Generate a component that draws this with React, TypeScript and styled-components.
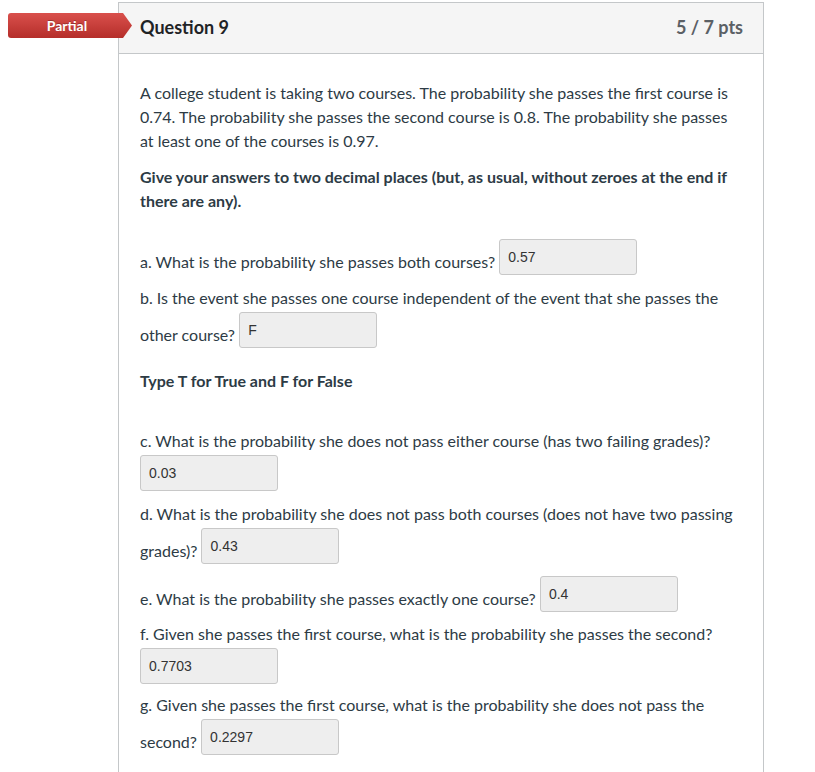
import React from 'react';
import styled, { createGlobalStyle } from 'styled-components';

const GlobalStyle = createGlobalStyle`
  html, body { margin: 0; padding: 0; background: #ffffff; }
  body {
    font-family: Lato, "Open Sans", "Liberation Sans", sans-serif;
    color: #2d3b45;
  }
`;

const Page = styled.div`
  box-sizing: border-box;
  width: 815px;
  padding: 2px 0 0 118px;
`;

const Question = styled.section`
  position: relative;
  box-sizing: border-box;
  width: 646px;
  border: 1px solid #c4c7c9;
  border-bottom: none;
`;

const Badge = styled.div`
  position: absolute;
  left: -111px;
  top: 10px;
  box-sizing: border-box;
  width: 124px;
  height: 25px;
  padding-right: 6px;
  display: flex;
  align-items: center;
  justify-content: center;
  border-radius: 3px 0 0 3px;
  background: linear-gradient(#d9504c, #b52e2a);
  clip-path: polygon(0 0, calc(100% - 9px) 0, 100% 50%, calc(100% - 9px) 100%, 0 100%);
  color: #ffffff;
  font-size: 14px;
  font-weight: 700;
  text-shadow: 0 -1px 0 rgba(0, 0, 0, 0.25);
`;

const Header = styled.header`
  display: flex;
  align-items: center;
  justify-content: space-between;
  box-sizing: border-box;
  height: 51px;
  padding: 0 20px 2px 21px;
  background: #f5f5f5;
  border-bottom: 1px solid #c4c7c9;
`;

const Title = styled.h2`
  margin: 0;
  font-size: 18px;
  font-weight: 700;
  color: #1f2326;
`;

const Points = styled.div`
  font-size: 18px;
  font-weight: 700;
  color: #5b6065;
`;

const Body = styled.div`
  padding: 27px 20px 24px 21px;
`;

const P = styled.p<{ $mt?: number; $bold?: boolean }>`
  margin: ${(p) => p.$mt ?? 0}px 0 0;
  font-size: 16px;
  line-height: 24px;
  font-weight: ${(p) => (p.$bold ? 700 : 400)};
`;

const Answer = styled.span`
  display: inline-block;
  box-sizing: border-box;
  width: 138px;
  height: 36px;
  margin-top: 2px;
  padding: 7px 8px 0;
  border: 1px solid #c8c8c8;
  border-radius: 3px;
  background: #eeeeee;
  font-family: "Liberation Sans", Arial, sans-serif;
  font-size: 14px;
  line-height: 20px;
  font-weight: 400;
  color: #333333;
  vertical-align: 5.5px;
`;

export default function App() {
  return (
    <>
      <GlobalStyle />
      <Page>
        <Question>
          <Badge>Partial</Badge>
          <Header>
            <Title>Question 9</Title>
            <Points>5 / 7 pts</Points>
          </Header>
          <Body>
            <P>
              A college student is taking two courses. The probability she passes the first course is
              0.74. The probability she passes the second course is 0.8. The probability she passes
              at least one of the courses is 0.97.
            </P>
            <P $mt={12} $bold>
              Give your answers to two decimal places (but, as usual, without zeroes at the end if
              there are any).
            </P>
            <P $mt={24}>
              a. What is the probability she passes both courses? <Answer>0.57</Answer>
            </P>
            <P $mt={11}>
              b. Is the event she passes one course independent of the event that she passes the
              other course? <Answer>F</Answer>
            </P>
            <P $mt={21} $bold>
              Type T for True and F for False
            </P>
            <P $mt={36}>
              c. What is the probability she does not pass either course (has two failing grades)?{' '}
              <Answer>0.03</Answer>
            </P>
            <P $mt={11}>
              d. What is the probability she does not pass both courses (does not have two passing
              grades)? <Answer>0.43</Answer>
            </P>
            <P $mt={10}>
              e. What is the probability she passes exactly one course? <Answer>0.4</Answer>
            </P>
            <P $mt={10}>
              f. Given she passes the first course, what is the probability she passes the second?{' '}
              <Answer>0.7703</Answer>
            </P>
            <P $mt={9}>
              g. Given she passes the first course, what is the probability she does not pass the
              second? <Answer>0.2297</Answer>
            </P>
          </Body>
        </Question>
      </Page>
    </>
  );
}
